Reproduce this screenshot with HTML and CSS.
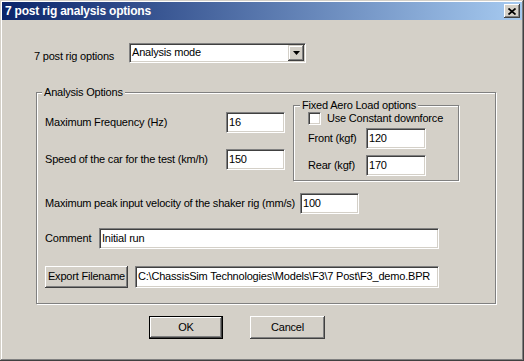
FILE: index.html
```html
<!DOCTYPE html>
<html>
<head>
<meta charset="utf-8">
<link rel="stylesheet" href="styles.css">
</head>
<body>
<div class="window">
  <div class="titlebar">
    <span class="title">7 post rig analysis options</span>
    <span class="close"><svg width="8" height="7" viewBox="0 0 8 7"><path d="M0.5 0.5 L7.5 6.5 M7.5 0.5 L0.5 6.5" stroke="#000" stroke-width="1.7" fill="none"/></svg></span>
  </div>
  <div class="body">
    <div class="mode-row">
      <span class="mode-label">7 post rig options</span>
      <div class="combo">
        <span class="combo-text">Analysis mode</span>
        <span class="drop"><svg width="7" height="4" viewBox="0 0 7 4"><polygon points="0,0 7,0 3.5,4" fill="#000"/></svg></span>
      </div>
    </div>

    <fieldset class="group main">
      <legend>Analysis Options</legend>
      <div class="main-inner">
        <div class="top">
          <div class="leftcol">
            <div class="row"><span class="lbl w181">Maximum Frequency (Hz)</span><input class="field w59" type="text" value="16"></div>
            <div class="row gap16"><span class="lbl w181">Speed of the car for the test (km/h)</span><input class="field w59" type="text" value="150"></div>
          </div>
          <fieldset class="group aero">
            <legend>Fixed Aero Load options</legend>
            <div class="aero-inner">
              <div class="check-row"><span class="checkbox"></span><span class="check-label">Use Constant downforce</span></div>
              <div class="row front"><span class="lbl w58">Front (kgf)</span><input class="field w60" type="text" value="120"></div>
              <div class="row rear"><span class="lbl w58">Rear (kgf)</span><input class="field w60" type="text" value="170"></div>
            </div>
          </fieldset>
        </div>
        <div class="row velocity"><span class="lbl w255">Maximum peak input velocity of the shaker rig (mm/s)</span><input class="field w59" type="text" value="100"></div>
        <div class="row comment"><span class="lbl w54">Comment</span><input class="field w340" type="text" value="Initial run"></div>
        <div class="row export"><button class="btn export-btn">Export Filename</button><input class="field path" type="text" value="C:\ChassisSim Technologies\Models\F3\7 Post\F3_demo.BPR"></div>
      </div>
    </fieldset>

    <div class="buttons">
      <button class="btn default ok">OK</button>
      <button class="btn cancel">Cancel</button>
    </div>
  </div>
</div>
</body>
</html>
```

FILE: styles.css
```css
html, body {
  margin: 0;
  padding: 0;
  background: #d4d0c8;
}

body {
  font-family: "Liberation Sans", Arial, sans-serif;
  font-size: 11px;
  letter-spacing: -0.2px;
  color: #000;
}

.window {
  width: 524px;
  height: 361px;
  box-sizing: border-box;
  padding: 2px;
  background: #d4d0c8;
  box-shadow: inset -1px -1px 0 #404040, inset 1px 1px 0 #d4d0c8, inset -2px -2px 0 #808080, inset 2px 2px 0 #ffffff;
  display: flex;
  flex-direction: column;
}

.titlebar {
  height: 18px;
  flex: none;
  background: linear-gradient(to right, #0a246a, #a6caf0);
  display: flex;
  align-items: center;
  justify-content: space-between;
  padding: 0 2px 0 3px;
}

.title {
  color: #fff;
  font-weight: bold;
  font-size: 12px;
  line-height: 14px;
  letter-spacing: -0.2px;
}

.close {
  width: 16px;
  height: 14px;
  box-sizing: border-box;
  background: #d4d0c8;
  box-shadow: inset -1px -1px 0 #404040, inset 1px 1px 0 #ffffff, inset -2px -2px 0 #808080;
  display: flex;
  align-items: center;
  justify-content: center;
  padding-right: 1px;
}

.close svg {
  display: block;
}

.body {
  flex: 1;
  display: flex;
  flex-direction: column;
  align-items: flex-start;
}

/* top combo row */
.mode-row {
  margin: 23px 0 0 32px;
  display: flex;
  align-items: flex-start;
  height: 20px;
}

.mode-label {
  width: 95px;
  padding-top: 7px;
  line-height: 13px;
}

.combo {
  width: 177px;
  height: 20px;
  box-sizing: border-box;
  background: #fff;
  border: 1px solid;
  border-color: #808080 #ffffff #ffffff #808080;
  box-shadow: inset 1px 1px 0 #404040, inset -1px -1px 0 #d4d0c8;
  display: flex;
  align-items: center;
  justify-content: space-between;
  padding: 1px;
}

.combo-text {
  padding-left: 1px;
  line-height: 13px;
  margin-top: -2px;
}

.drop {
  width: 16px;
  height: 16px;
  box-sizing: border-box;
  background: #d4d0c8;
  box-shadow: inset -1px -1px 0 #404040, inset 1px 1px 0 #d4d0c8, inset -2px -2px 0 #808080, inset 2px 2px 0 #ffffff;
  display: flex;
  align-items: center;
  justify-content: center;
}

.drop svg {
  display: block;
}

/* group boxes */
.group {
  margin: 0;
  padding: 0;
  min-inline-size: 0;
  border: 1px solid #808080;
  box-shadow: 1px 1px 0 #ffffff, inset 1px 1px 0 #ffffff;
  box-sizing: border-box;
}

.group legend {
  padding: 0 2px;
  line-height: 13px;
  background: #d4d0c8;
}

.main {
  margin: 23px 0 0 34px;
  width: 460px;
}

.main > legend {
  margin-left: 5px;
}

.main-inner {
  padding: 0 0 15px 8px;
}

.top {
  display: flex;
  align-items: flex-start;
}

.leftcol {
  padding-top: 13px;
  display: flex;
  flex-direction: column;
}

.row {
  display: flex;
  align-items: center;
}

.gap16 {
  margin-top: 16px;
}

.lbl {
  line-height: 13px;
  white-space: nowrap;
}

.w181 { width: 181px; }
.w58 { width: 58px; }
.w255 { width: 255px; }
.w54 { width: 54px; }

.field {
  font-family: "Liberation Sans", Arial, sans-serif;
  font-size: 11px;
  letter-spacing: -0.2px;
  color: #000;
  height: 21px;
  box-sizing: border-box;
  background: #fff;
  border: 1px solid;
  border-color: #808080 #ffffff #ffffff #808080;
  box-shadow: inset 1px 1px 0 #404040, inset -1px -1px 0 #d4d0c8;
  padding: 0 2px 2px 2px;
  margin: 0;
  outline: none;
}

.w59 { width: 59px; }
.w60 { width: 60px; }
.w340 { width: 340px; }

.aero {
  margin-left: 8px;
  width: 166px;
  height: 82px;
}

.aero > legend {
  margin-left: 6px;
}

.aero-inner {
  padding: 0 0 0 14px;
}

.check-row {
  display: flex;
  align-items: center;
}

.checkbox {
  width: 13px;
  height: 13px;
  box-sizing: border-box;
  background: #fff;
  border: 1px solid;
  border-color: #808080 #ffffff #ffffff #808080;
  box-shadow: inset 1px 1px 0 #404040, inset -1px -1px 0 #d4d0c8;
}

.check-label {
  margin-left: 6px;
  line-height: 13px;
}

.front {
  margin-top: 3px;
}

.rear {
  margin-top: 6px;
}

.velocity {
  margin-top: 12px;
}

.comment {
  margin-top: 14px;
}

.export {
  margin-top: 17px;
}

.btn {
  font-family: "Liberation Sans", Arial, sans-serif;
  font-size: 11px;
  letter-spacing: -0.2px;
  color: #000;
  background: #d4d0c8;
  border: none;
  margin: 0;
  padding: 0;
  box-sizing: border-box;
  box-shadow: inset -1px -1px 0 #404040, inset 1px 1px 0 #ffffff, inset -2px -2px 0 #808080;
  line-height: 13px;
}

.export-btn {
  width: 83px;
  height: 22px;
  padding-bottom: 1px;
}

.path {
  margin-left: 7px;
  width: 304px;
  height: 22px;
}

.buttons {
  margin: 12px 0 0 147px;
  display: flex;
  gap: 27px;
}

.ok {
  width: 74px;
  height: 23px;
}

.cancel {
  width: 75px;
  height: 23px;
}

.default {
  border: 1px solid #000;
}
```
